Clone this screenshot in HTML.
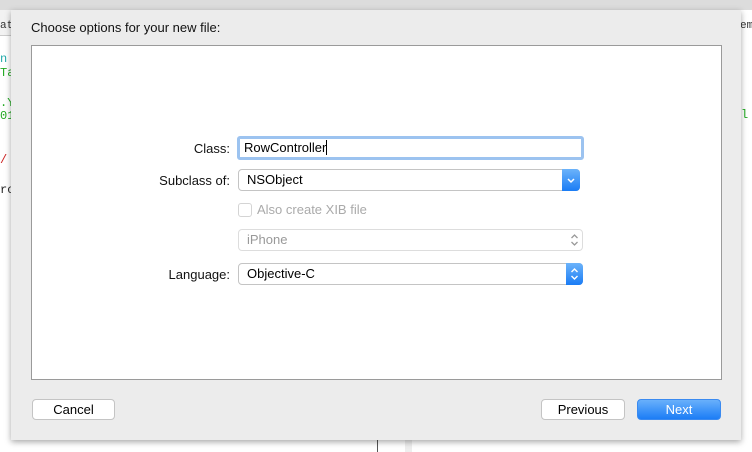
<!DOCTYPE html>
<html><head><style>
body{margin:0;width:752px;height:452px;position:relative;overflow:hidden;background:#fff;font-family:"Liberation Sans",sans-serif;}
.a{position:absolute}
.code{font-family:"Liberation Mono",monospace;font-size:12px;left:0}
.dlg{left:11px;top:10px;width:730px;height:430px;background:#ececec;box-shadow:0 2px 6px rgba(0,0,0,.35)}
.box{left:31px;top:45px;width:689px;height:333px;background:#fff;border:1px solid #9a9a9a}
.lbl{font-size:13px;color:#111;text-align:right;width:200px;left:30px}
.fld{background:#fff;border:1px solid #c4c4c4;border-radius:4px;font-size:13px;box-sizing:border-box;padding-left:8px}
.btn{background:#fff;border:1px solid #c4c4c4;border-radius:4px;font-size:13px;text-align:center;line-height:20px;height:21px;box-sizing:border-box}
.blue{background:linear-gradient(#6cb3fa,#1a7cf5);border-radius:0 4px 4px 0}
</style></head><body>
<div class="a" style="left:0;top:0;width:752px;height:10px;background:#dcdcdc"></div>
<div class="a" style="left:0;top:10px;width:30px;height:25px;background:#f2f2f2;border-bottom:1px solid #ccc"></div>
<div class="a code" style="top:20px;font-size:11px;color:#333">ata</div>
<div class="a code" style="top:52px;color:#2aa">n</div>
<div class="a code" style="top:66px;color:#2a2">Ta</div>
<div class="a code" style="top:96px;color:#2a2">.Y</div>
<div class="a code" style="top:109px;color:#2a2">01</div>
<div class="a code" style="top:153px;color:#c22">/</div>
<div class="a code" style="top:183px;color:#222">ro</div>
<div class="a code" style="left:740px;top:20px;font-size:11px;color:#333">em</div>
<div class="a code" style="left:741px;top:108px;color:#2a2">l</div>
<div class="a" style="left:377px;top:440px;width:1px;height:12px;background:#555"></div>
<div class="a" style="left:405px;top:440px;width:7px;height:12px;background:#eee"></div>
<div class="a dlg"></div>
<div class="a" style="left:31px;top:20px;font-size:13px;color:#111">Choose options for your new file:</div>
<div class="a box"></div>
<div class="a lbl" style="top:141px">Class:</div>
<div class="a fld" style="left:237px;top:136px;width:347px;height:24px;border:3px solid #9cc3f0;border-radius:3px;padding-left:4px;line-height:18px">RowController<span style="border-left:1px solid #000;margin-left:0"></span></div>
<div class="a lbl" style="top:173px">Subclass of:</div>
<div class="a fld" style="left:238px;top:169px;width:342px;height:22px;line-height:20px">NSObject</div>
<div class="a blue" style="left:562px;top:169px;width:18px;height:22px"><svg width="18" height="22"><path d="M6 10 L9 13 L12 10" fill="none" stroke="#fff" stroke-width="1.5"/></svg></div>
<div class="a" style="left:238px;top:203px;width:12px;height:12px;border:1px solid #d4d4d4;border-radius:3px;background:#fff"></div>
<div class="a" style="left:257px;top:202px;font-size:13px;color:#aaa">Also create XIB file</div>
<div class="a fld" style="left:238px;top:229px;width:345px;height:22px;line-height:20px;color:#999;border-color:#ddd">iPhone</div>
<svg class="a" style="left:566px;top:229px" width="17" height="22"><path d="M5.5 9 L8.5 6 L11.5 9 M5.5 13 L8.5 16 L11.5 13" fill="none" stroke="#999" stroke-width="1.3"/></svg>
<div class="a lbl" style="top:267px">Language:</div>
<div class="a fld" style="left:238px;top:263px;width:345px;height:22px;line-height:20px">Objective-C</div>
<div class="a blue" style="left:566px;top:263px;width:17px;height:22px"><svg width="17" height="22"><path d="M5.5 9 L8.5 6 L11.5 9 M5.5 13 L8.5 16 L11.5 13" fill="none" stroke="#fff" stroke-width="1.4"/></svg></div>
<div class="a btn" style="left:32px;top:399px;width:83px">Cancel</div>
<div class="a btn" style="left:541px;top:399px;width:84px">Previous</div>
<div class="a btn" style="left:637px;top:399px;width:84px;background:linear-gradient(#69b0fb,#1c7df6);border-color:#3a8af0;color:#fff">Next</div>
</body></html>
